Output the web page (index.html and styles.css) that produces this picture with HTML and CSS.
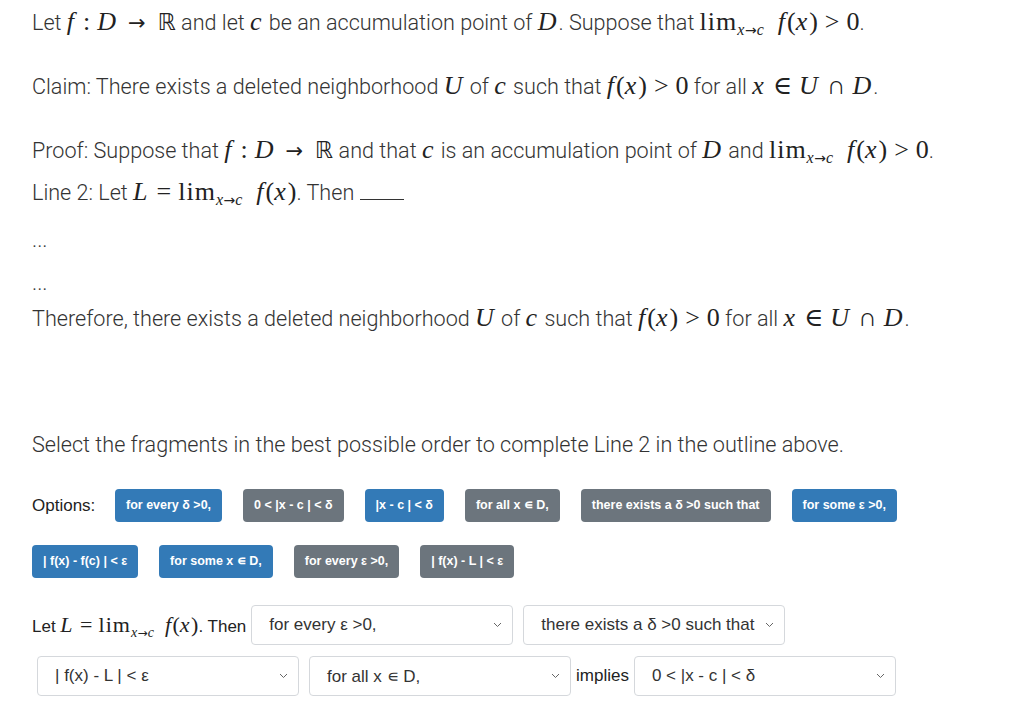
FILE: index.html
```html
<!DOCTYPE html>
<html>
<head>
<meta charset="utf-8">
<link rel="stylesheet" href="styles.css">
</head>
<body>
<div class="page">
  <p class="line l1">Let <span class="m"><i>f</i><span class="op">:</span><i>D</i><span class="op arr">→</span><span class="bb">ℝ</span></span> and let <span class="m"><i>c</i></span> be an accumulation point of <span class="m"><i>D</i></span>. Suppose that <span class="m"><span class="lim">lim</span><sub><i>x</i><span class="sarr">→</span><i>c</i></sub> <i>f</i>(<i>x</i>)<span class="op">&gt;</span>0</span>.</p>
  <p class="line l2">Claim: There exists a deleted neighborhood <span class="m"><i>U</i></span> of <span class="m"><i>c</i></span> such that <span class="m"><i>f</i>(<i>x</i>)<span class="op">&gt;</span>0</span> for all <span class="m"><i>x</i><span class="op">∈</span><i>U</i><span class="op">∩</span><i>D</i></span>.</p>
  <p class="line l3">Proof: Suppose that <span class="m"><i>f</i><span class="op">:</span><i>D</i><span class="op arr">→</span><span class="bb">ℝ</span></span> and that <span class="m"><i>c</i></span> is an accumulation point of <span class="m"><i>D</i></span> and <span class="m"><span class="lim">lim</span><sub><i>x</i><span class="sarr">→</span><i>c</i></sub> <i>f</i>(<i>x</i>)<span class="op">&gt;</span>0</span>.</p>
  <p class="line l4">Line 2: Let <span class="m"><i>L</i><span class="op">=</span><span class="lim">lim</span><sub><i>x</i><span class="sarr">→</span><i>c</i></sub> <i>f</i>(<i>x</i>)</span>. Then <span class="blank"></span></p>
  <p class="line l5">...</p>
  <p class="line l6">...</p>
  <p class="line l7">Therefore, there exists a deleted neighborhood <span class="m"><i>U</i></span> of <span class="m"><i>c</i></span> such that <span class="m"><i>f</i>(<i>x</i>)<span class="op">&gt;</span>0</span> for all <span class="m"><i>x</i><span class="op">∈</span><i>U</i><span class="op">∩</span><i>D</i></span>.</p>
  <p class="line l8">Select the fragments in the best possible order to complete Line 2 in the outline above.</p>

  <div class="options">
    <span class="opt-label">Options:</span>
    <span class="chip blue">for every δ &gt;0,</span>
    <span class="chip grey">0 &lt; |x - c | &lt; δ</span>
    <span class="chip blue">|x - c | &lt; δ</span>
    <span class="chip grey">for all x ∊ D,</span>
    <span class="chip grey">there exists a δ &gt;0 such that</span>
    <span class="chip blue">for some ε &gt;0,</span>
    <span class="chip blue">| f(x) - f(c) | &lt; ε</span>
    <span class="chip blue">for some x ∊ D,</span>
    <span class="chip grey">for every ε &gt;0,</span>
    <span class="chip grey">| f(x) - L | &lt; ε</span>
  </div>

  <div class="answer">
    <span class="atext">Let <span class="m am"><i>L</i><span class="op">=</span><span class="lim">lim</span><sub><i>x</i><span class="sarr">→</span><i>c</i></sub> <i>f</i>(<i>x</i>)</span>. Then</span>
    <div class="sel"><span>for every ε &gt;0,</span><svg width="9" height="6" viewBox="0 0 9 6"><path d="M1 1 L4.5 4.5 L8 1" fill="none" stroke="#666" stroke-width="1"/></svg></div>
    <div class="sel"><span>there exists a δ &gt;0 such that</span><svg width="9" height="6" viewBox="0 0 9 6"><path d="M1 1 L4.5 4.5 L8 1" fill="none" stroke="#666" stroke-width="1"/></svg></div>
    <div class="sel"><span>| f(x) - L | &lt; ε</span><svg width="9" height="6" viewBox="0 0 9 6"><path d="M1 1 L4.5 4.5 L8 1" fill="none" stroke="#666" stroke-width="1"/></svg></div>
    <div class="sel"><span>for all x ∊ D,</span><svg width="9" height="6" viewBox="0 0 9 6"><path d="M1 1 L4.5 4.5 L8 1" fill="none" stroke="#666" stroke-width="1"/></svg></div>
    <span class="atext">implies</span>
    <div class="sel"><span>0 &lt; |x - c | &lt; δ</span><svg width="9" height="6" viewBox="0 0 9 6"><path d="M1 1 L4.5 4.5 L8 1" fill="none" stroke="#666" stroke-width="1"/></svg></div>
  </div>
</div>
</body>
</html>
```

FILE: styles.css
```css
html, body {
  margin: 0;
  padding: 0;
  background: #fff;
}
.page {
  padding: 6px 32px 0 32px;
  font-family: Roboto, "Liberation Sans", sans-serif;
  font-weight: 300;
  font-size: 21.6px;
  color: #333;
}
.line {
  margin: 0;
  height: 32px;
  line-height: 32px;
  white-space: nowrap;
}
.l2, .l3 { margin-top: 32px; }
.l4 { margin-top: 10px; }
.l5 { margin-top: 16px; }
.l6 { margin-top: 11px; }
.l7 { margin-top: 3px; }
.l8 { margin-top: 95px; }

.m {
  font-family: "Liberation Serif", "DejaVu Serif", serif;
  font-weight: 400;
  font-size: 26px;
  color: #222;
}
.m i { font-style: italic; letter-spacing: 2px; }
.m sub {
  font-size: 16px;
  vertical-align: -5px;
  line-height: 0;
  margin-right: 7px;
}
.m sub i { letter-spacing: 0.5px; }
.op { margin: 0 7px; font-style: normal; }
.arr {
  font-family: "DejaVu Sans", sans-serif;
  font-size: 21px;
  margin: 0 12px 0 10px;
}
.sarr {
  font-family: "DejaVu Sans", sans-serif;
  font-size: 14px;
}
.bb { font-family: "DejaVu Sans", sans-serif; font-size: 23px; }
.lim { font-style: normal; letter-spacing: 1px; }
.blank {
  display: inline-block;
  width: 44px;
  border-bottom: 1px solid #333;
  height: 22px;
  vertical-align: baseline;
}

.options {
  margin-top: 28px;
  display: flex;
  flex-wrap: wrap;
  align-items: center;
  gap: 23px 21px;
}
.opt-label {
  font-family: "Liberation Sans", Arial, sans-serif;
  font-weight: 400;
  font-size: 17px;
  color: #222;
  width: 62px;
}
.chip {
  height: 33px;
  line-height: 33px;
  padding: 0 11px;
  border-radius: 4px;
  font-family: "Liberation Sans", Arial, sans-serif;
  font-weight: 700;
  font-size: 12.5px;
  color: #fff;
  white-space: nowrap;
}
.blue { background: #337ab7; }
.grey { background: #6c757d; }

.answer {
  margin-top: 27px;
  display: flex;
  flex-wrap: wrap;
  align-items: center;
  row-gap: 11px;
  font-family: "Liberation Sans", Arial, sans-serif;
  font-weight: 400;
  font-size: 17px;
  color: #222;
}
.am { font-size: 22px; }
.am i { letter-spacing: 1.5px; }
.am sub { font-size: 14px; margin-right: 5px; }
.am .sarr { font-size: 12px; }
.am .op { margin: 0 6px; }
.sel {
  box-sizing: border-box;
  width: 262px;
  height: 40px;
  margin: 0 5px;
  padding: 0 10px 0 17px;
  border: 1px solid #d5d8dc;
  border-radius: 4px;
  display: flex;
  align-items: center;
  justify-content: space-between;
  font-size: 17px;
  color: #333;
  white-space: nowrap;
}
```
